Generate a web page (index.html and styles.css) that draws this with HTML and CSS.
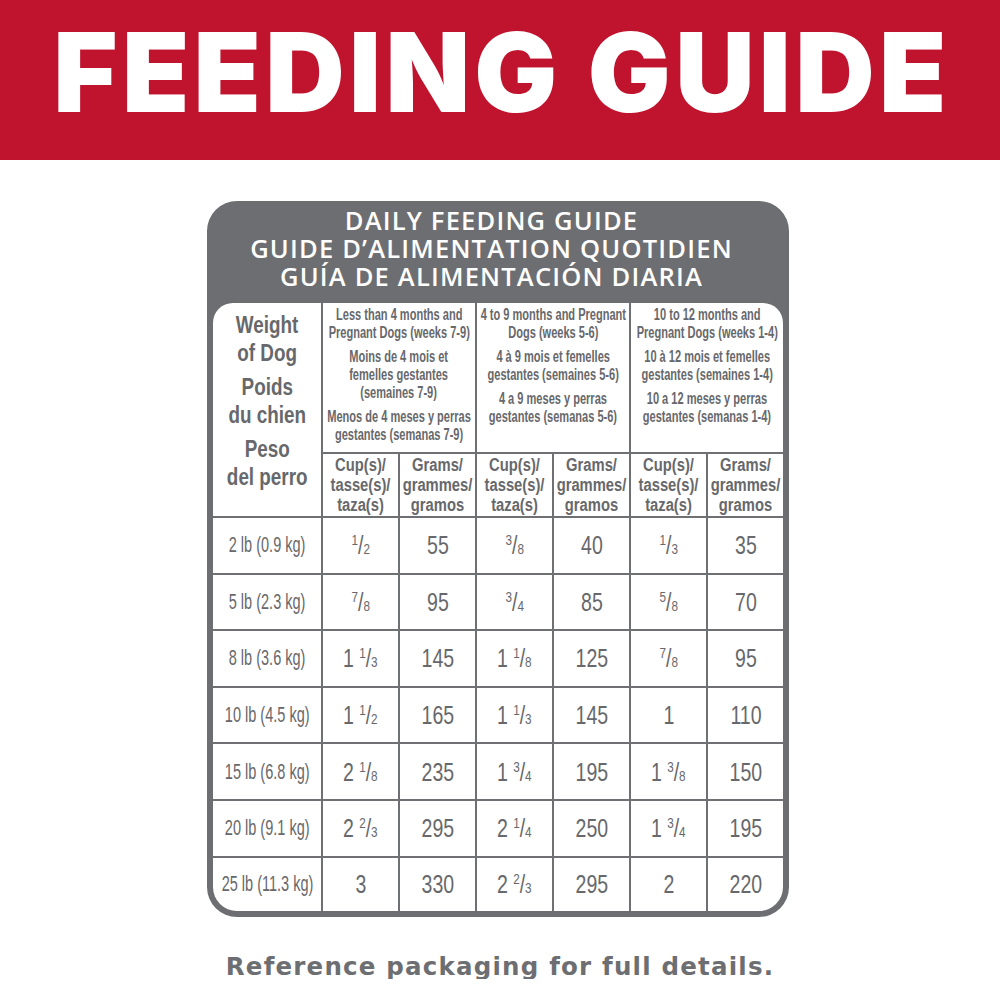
FILE: index.html
```html
<!DOCTYPE html>
<html lang="en">
<head>
<meta charset="utf-8">
<title>Feeding Guide</title>
<link rel="stylesheet" href="styles.css">
</head>
<body>
<header class="banner"><h1>FEEDING GUIDE</h1></header>

<section class="card">
  <div class="card-title">
    <div>DAILY FEEDING GUIDE</div>
    <div>GUIDE D’ALIMENTATION QUOTIDIEN</div>
    <div>GUÍA DE ALIMENTACIÓN DIARIA</div>
  </div>
  <div class="table-wrap">
    <table>
      <colgroup>
        <col class="c-w"><col class="c-n"><col class="c-n"><col class="c-n"><col class="c-n"><col class="c-n"><col class="c-last">
      </colgroup>
      <thead>
        <tr class="r-age">
          <th rowspan="2" class="weight-head">
            <div class="hcell weight">
              <p>Weight<br>of Dog</p>
              <p>Poids<br>du chien</p>
              <p>Peso<br>del perro</p>
            </div>
          </th>
          <th colspan="2">
            <div class="hcell age">
              <p>Less than 4 months and<br>Pregnant Dogs (weeks 7-9)</p>
              <p>Moins de 4 mois et<br>femelles gestantes<br>(semaines 7-9)</p>
              <p>Menos de 4 meses y perras<br>gestantes (semanas 7-9)</p>
            </div>
          </th>
          <th colspan="2">
            <div class="hcell age">
              <p>4 to 9 months and Pregnant<br>Dogs (weeks 5-6)</p>
              <p>4 à 9 mois et femelles<br>gestantes (semaines 5-6)</p>
              <p>4 a 9 meses y perras<br>gestantes (semanas 5-6)</p>
            </div>
          </th>
          <th colspan="2">
            <div class="hcell age">
              <p>10 to 12 months and<br>Pregnant Dogs (weeks 1-4)</p>
              <p>10 à 12 mois et femelles<br>gestantes (semaines 1-4)</p>
              <p>10 a 12 meses y perras<br>gestantes (semanas 1-4)</p>
            </div>
          </th>
        </tr>
        <tr class="r-unit">
          <th><div class="hcell unit"><p>Cup(s)/<br>tasse(s)/<br>taza(s)</p></div></th>
          <th><div class="hcell unit"><p>Grams/<br>grammes/<br>gramos</p></div></th>
          <th><div class="hcell unit"><p>Cup(s)/<br>tasse(s)/<br>taza(s)</p></div></th>
          <th><div class="hcell unit"><p>Grams/<br>grammes/<br>gramos</p></div></th>
          <th><div class="hcell unit"><p>Cup(s)/<br>tasse(s)/<br>taza(s)</p></div></th>
          <th><div class="hcell unit"><p>Grams/<br>grammes/<br>gramos</p></div></th>
        </tr>
      </thead>
      <tbody>
        <tr class="r-data">
          <th class="wt"><div class="in"><span>2 lb (0.9 kg)</span></div></th>
          <td><span class="v"><span class="fr"><span class="nu">1</span>/<span class="de">2</span></span></span></td>
          <td><span class="v">55</span></td>
          <td><span class="v"><span class="fr"><span class="nu">3</span>/<span class="de">8</span></span></span></td>
          <td><span class="v">40</span></td>
          <td><span class="v"><span class="fr"><span class="nu">1</span>/<span class="de">3</span></span></span></td>
          <td><span class="v">35</span></td>
        </tr>
        <tr class="r-data">
          <th class="wt"><div class="in"><span>5 lb (2.3 kg)</span></div></th>
          <td><span class="v"><span class="fr"><span class="nu">7</span>/<span class="de">8</span></span></span></td>
          <td><span class="v">95</span></td>
          <td><span class="v"><span class="fr"><span class="nu">3</span>/<span class="de">4</span></span></span></td>
          <td><span class="v">85</span></td>
          <td><span class="v"><span class="fr"><span class="nu">5</span>/<span class="de">8</span></span></span></td>
          <td><span class="v">70</span></td>
        </tr>
        <tr class="r-data">
          <th class="wt"><div class="in"><span>8 lb (3.6 kg)</span></div></th>
          <td><span class="v">1 <span class="fr"><span class="nu">1</span>/<span class="de">3</span></span></span></td>
          <td><span class="v">145</span></td>
          <td><span class="v">1 <span class="fr"><span class="nu">1</span>/<span class="de">8</span></span></span></td>
          <td><span class="v">125</span></td>
          <td><span class="v"><span class="fr"><span class="nu">7</span>/<span class="de">8</span></span></span></td>
          <td><span class="v">95</span></td>
        </tr>
        <tr class="r-data">
          <th class="wt"><div class="in"><span>10 lb (4.5 kg)</span></div></th>
          <td><span class="v">1 <span class="fr"><span class="nu">1</span>/<span class="de">2</span></span></span></td>
          <td><span class="v">165</span></td>
          <td><span class="v">1 <span class="fr"><span class="nu">1</span>/<span class="de">3</span></span></span></td>
          <td><span class="v">145</span></td>
          <td><span class="v">1</span></td>
          <td><span class="v">110</span></td>
        </tr>
        <tr class="r-data">
          <th class="wt"><div class="in"><span>15 lb (6.8 kg)</span></div></th>
          <td><span class="v">2 <span class="fr"><span class="nu">1</span>/<span class="de">8</span></span></span></td>
          <td><span class="v">235</span></td>
          <td><span class="v">1 <span class="fr"><span class="nu">3</span>/<span class="de">4</span></span></span></td>
          <td><span class="v">195</span></td>
          <td><span class="v">1 <span class="fr"><span class="nu">3</span>/<span class="de">8</span></span></span></td>
          <td><span class="v">150</span></td>
        </tr>
        <tr class="r-data">
          <th class="wt"><div class="in"><span>20 lb (9.1 kg)</span></div></th>
          <td><span class="v">2 <span class="fr"><span class="nu">2</span>/<span class="de">3</span></span></span></td>
          <td><span class="v">295</span></td>
          <td><span class="v">2 <span class="fr"><span class="nu">1</span>/<span class="de">4</span></span></span></td>
          <td><span class="v">250</span></td>
          <td><span class="v">1 <span class="fr"><span class="nu">3</span>/<span class="de">4</span></span></span></td>
          <td><span class="v">195</span></td>
        </tr>
        <tr class="r-data r-last">
          <th class="wt"><div class="in"><span>25 lb (11.3 kg)</span></div></th>
          <td><span class="v">3</span></td>
          <td><span class="v">330</span></td>
          <td><span class="v">2 <span class="fr"><span class="nu">2</span>/<span class="de">3</span></span></span></td>
          <td><span class="v">295</span></td>
          <td><span class="v">2</span></td>
          <td><span class="v">220</span></td>
        </tr>
      </tbody>
    </table>
  </div>
</section>

<p class="note">Reference packaging for full details.</p>
</body>
</html>
```
FILE: styles.css
```css
* { box-sizing: border-box; }

body {
  margin: 0;
  background: #ffffff;
}

/* ---------- red banner ---------- */
.banner {
  height: 160px;
  background: #c0132d;
  display: flex;
  justify-content: center;
  padding-top: 17px;
  padding-left: 4px;
}
.banner h1 {
  margin: 0;
  font-family: Inter, "Liberation Sans", sans-serif;
  font-weight: 900;
  font-size: 110px;
  line-height: 110px;
  letter-spacing: 4.3px;
  color: #ffffff;
}

/* ---------- grey card ---------- */
.card {
  width: 582px;
  margin: 41px 0 0 207px;
  background: #6d6e71;
  border-radius: 30px;
  padding: 0 6px 6px;
}
.card-title {
  height: 102px;
  padding: 5px 13px 0 0;
  text-align: center;
  color: #ffffff;
  font-family: "Open Sans", "Liberation Sans", sans-serif;
  font-weight: 600;
  font-size: 25.5px;
  line-height: 28px;
  letter-spacing: 1.2px;
}
.table-wrap {
  background: #ffffff;
  border-radius: 20px 20px 24px 24px;
  overflow: hidden;
}

/* ---------- table ---------- */
table {
  width: 570px;
  table-layout: fixed;
  border-collapse: collapse;
  border-style: hidden;
  font-family: "Liberation Sans", Arial, sans-serif;
  color: #67686b;
}
col.c-w { width: 109px; }
col.c-n { width: 77px; }
col.c-last { width: 76px; }

th, td {
  border: 2px solid #6f7073;
  padding: 0;
  text-align: center;
  font-weight: 400;
}

.hcell {
  display: flex;
  flex-direction: column;
  align-items: center;
}
.hcell p {
  margin: 0;
  white-space: nowrap;
}

/* header row 1 */
.r-age { height: 150px; }
.r-age th { vertical-align: top; }

.weight { padding-top: 8px; }
.weight p {
  font-size: 23px;
  line-height: 28px;
  font-weight: 700;
  transform: scaleX(0.82);
}
.weight p + p { margin-top: 6px; }

.age { padding-top: 3px; }
.age p {
  font-size: 16px;
  line-height: 18px;
  font-weight: 700;
  transform: scaleX(0.69);
}
.age p + p { margin-top: 6px; }

/* header row 2 */
.r-unit { height: 64px; }
.r-unit th { vertical-align: middle; }
.unit p {
  font-size: 18px;
  line-height: 20px;
  font-weight: 700;
  transform: scaleX(0.82);
}

/* data rows */
.r-data { height: 56.6px; }
.r-last { height: 54px; }
.r-data td {
  font-size: 25px;
  line-height: 28px;
  vertical-align: middle;
}
.v {
  display: inline-block;
  white-space: nowrap;
  transform: scaleX(0.78);
}
.wt {
  font-size: 22px;
  line-height: 26px;
  vertical-align: middle;
}
.wt .in {
  display: flex;
  justify-content: center;
}
.wt .in span {
  display: inline-block;
  white-space: nowrap;
  transform: scaleX(0.66);
}

.fr .nu,
.fr .de {
  font-size: 15px;
  line-height: 0;
}
.fr .nu { vertical-align: 9px; }
.fr .de { vertical-align: 0; }

/* ---------- footnote ---------- */
.note {
  margin: 38px 0 0;
  text-align: center;
  font-family: "DejaVu Sans", Verdana, sans-serif;
  font-weight: 700;
  font-size: 24.5px;
  line-height: 24px;
  letter-spacing: 1.2px;
  color: #6d6e71;
}
```
